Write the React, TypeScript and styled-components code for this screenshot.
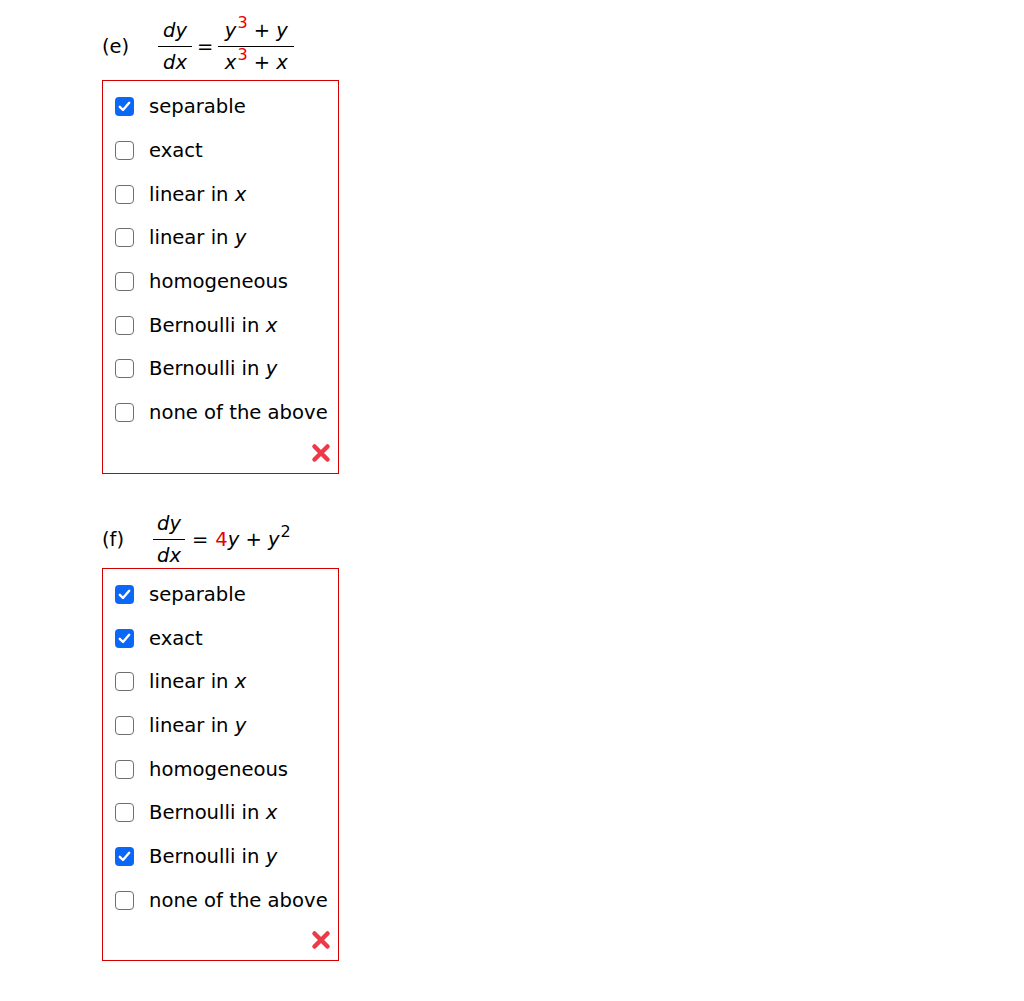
import styled, { createGlobalStyle } from "styled-components";

const Global = createGlobalStyle`
  html, body {
    margin: 0;
    background: #fff;
  }
  body {
    font-family: "DejaVu Sans", Verdana, sans-serif;
    color: #000;
  }
`;

const Page = styled.div`
  padding: 12px 0 40px 100px;
  width: 400px;
`;

const Question = styled.section`
  & + & {
    margin-top: 38px;
  }
`;

const Header = styled.div<{ h: number }>`
  height: ${(p) => p.h}px;
  display: flex;
  align-items: center;
  font-size: 19.5px;
`;

const Label = styled.span<{ w: number }>`
  width: ${(p) => p.w}px;
  padding-left: 2px;
  box-sizing: border-box;
  flex: none;
`;

const Frac = styled.span<{ w?: number }>`
  display: inline-flex;
  flex-direction: column;
  align-items: center;
  ${(p) => (p.w ? `width: ${p.w}px;` : "")}
  line-height: 23px;
`;

const Num = styled.span`
  padding-bottom: 4px;
  white-space: nowrap;
`;

const Den = styled.span`
  padding-top: 4px;
  white-space: nowrap;
`;

const Bar = styled.span`
  align-self: stretch;
  height: 1px;
  background: #000;
`;

const V = styled.i`
  font-style: italic;
`;

const Red = styled.span`
  color: #e50000;
`;

const Sup = styled.sup`
  font-size: 16px;
  line-height: 0;
  vertical-align: 9px;
  margin-left: 1px;
`;

const Eq = styled.span<{ gap: number }>`
  margin: 0 ${(p) => p.gap}px;
`;

const Box = styled.div`
  margin-left: 2px;
  width: 235px;
  border: 1px solid #d40000;
  padding: 4px 0 2px;
`;

const Row = styled.label`
  height: 43.7px;
  display: flex;
  align-items: center;
  padding-left: 12px;
  font-size: 19.6px;
  gap: 15px;
`;

const Check = styled.span<{ on: boolean }>`
  width: 19px;
  height: 19px;
  box-sizing: border-box;
  border-radius: 4px;
  flex: none;
  display: flex;
  align-items: center;
  justify-content: center;
  background: ${(p) => (p.on ? "#0b68f6" : "#fff")};
  border: ${(p) => (p.on ? "none" : "1.5px solid #6f6f6f")};
`;

const Mark = styled.div`
  height: 36px;
  display: flex;
  justify-content: flex-end;
  align-items: center;
  padding-right: 6px;
`;

type Opt = { text: string; v?: string };

const names: Opt[] = [
  { text: "separable" },
  { text: "exact" },
  { text: "linear in ", v: "x" },
  { text: "linear in ", v: "y" },
  { text: "homogeneous" },
  { text: "Bernoulli in ", v: "x" },
  { text: "Bernoulli in ", v: "y" },
  { text: "none of the above" },
];

function Cross() {
  return (
    <svg width="22" height="20" viewBox="0 0 22 20">
      <path
        d="M4.5 3.5 L17.5 16.5 M17.5 3.5 L4.5 16.5"
        stroke="#ec3a48"
        strokeWidth="4.5"
        strokeLinecap="round"
      />
    </svg>
  );
}

function Options({ checked }: { checked: number[] }) {
  return (
    <Box>
      {names.map((o, i) => {
        const on = checked.includes(i);
        return (
          <Row key={i}>
            <Check on={on}>
              {on && (
                <svg width="13" height="11" viewBox="0 0 13 11">
                  <path
                    d="M1.8 5.8 L5 9 L11.2 1.8"
                    stroke="#fff"
                    strokeWidth="2.4"
                    fill="none"
                    strokeLinecap="round"
                    strokeLinejoin="round"
                  />
                </svg>
              )}
            </Check>
            <span>
              {o.text}
              {o.v && <V>{o.v}</V>}
            </span>
          </Row>
        );
      })}
      <Mark>
        <Cross />
      </Mark>
    </Box>
  );
}

export default function App() {
  return (
    <>
      <Global />
      <Page>
        <Question>
          <Header h={68}>
            <Label w={58}>(e)</Label>
            <Frac w={34}>
              <Num>
                <V>dy</V>
              </Num>
              <Bar />
              <Den>
                <V>dx</V>
              </Den>
            </Frac>
            <Eq gap={5}>=</Eq>
            <Frac w={76}>
              <Num>
                <V>y</V>
                <Sup>
                  <Red>3</Red>
                </Sup>{" "}
                + <V>y</V>
              </Num>
              <Bar />
              <Den>
                <V>x</V>
                <Sup>
                  <Red>3</Red>
                </Sup>{" "}
                + <V>x</V>
              </Den>
            </Frac>
          </Header>
          <Options checked={[0]} />
        </Question>
        <Question>
          <Header h={56}>
            <Label w={53}>(f)</Label>
            <Frac w={32}>
              <Num>
                <V>dy</V>
              </Num>
              <Bar />
              <Den>
                <V>dx</V>
              </Den>
            </Frac>
            <Eq gap={7}>=</Eq>
            <span>
              <Red>4</Red>
              <V>y</V> + <V>y</V>
              <Sup>2</Sup>
            </span>
          </Header>
          <Options checked={[0, 1, 6]} />
        </Question>
      </Page>
    </>
  );
}
